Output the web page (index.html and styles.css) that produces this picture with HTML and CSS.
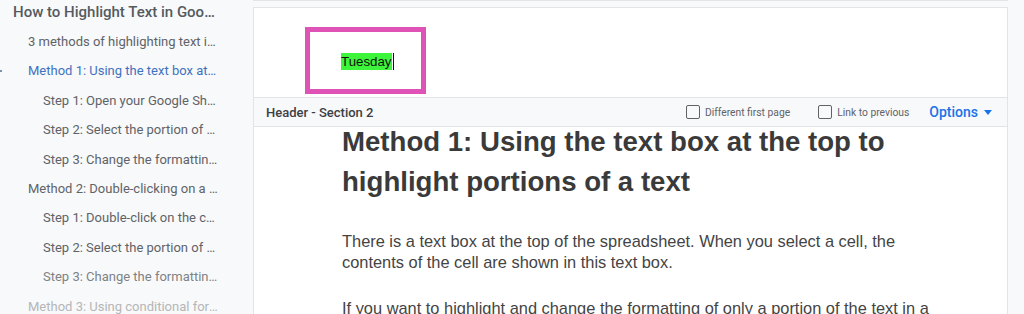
FILE: index.html
```html
<!DOCTYPE html>
<html>
<head>
<meta charset="utf-8">
<link rel="stylesheet" href="styles.css">
</head>
<body>
<nav class="outline">
  <div class="marker"></div>
  <div class="title">How to Highlight Text in Google Sheets</div>
  <div class="item l1">3 methods of highlighting text in Google Sheets</div>
  <div class="item l1 active">Method 1: Using the text box at the top</div>
  <div class="item l2">Step 1: Open your Google Sheets file</div>
  <div class="item l2">Step 2: Select the portion of the text</div>
  <div class="item l2">Step 3: Change the formatting of the text</div>
  <div class="item l1">Method 2: Double-clicking on a cell</div>
  <div class="item l2">Step 1: Double-click on the cell</div>
  <div class="item l2">Step 2: Select the portion of the text</div>
  <div class="item l2 fade1">Step 3: Change the formatting of the text</div>
  <div class="item l1 fade2">Method 3: Using conditional formatting</div>
</nav>
<main class="canvas">
  <div class="prev-page"></div>
  <section class="page">
    <div class="header-area">
      <div class="pink-box">
        <span class="hl">Tuesday</span><span class="caret"></span>
      </div>
    </div>
    <div class="header-bar">
      <span class="hb-label">Header - Section 2</span>
      <div class="hb-tools">
        <label class="cb"><span class="box"></span>Different first page</label>
        <label class="cb"><span class="box"></span>Link to previous</label>
        <span class="options">Options <svg class="caret-down" width="8" height="5" viewBox="0 0 8 5"><path d="M0 0h8L4 5z" fill="#1a73e8"/></svg></span>
      </div>
    </div>
    <article class="content">
      <h1>Method 1: Using the text box at the top to highlight portions of a text</h1>
      <p>There is a text box at the top of the spreadsheet. When you select a cell, the contents of the cell are shown in this text box.</p>
      <p>If you want to highlight and change the formatting of only a portion of the text in a cell, you can do it from this text box.</p>
    </article>
  </section>
</main>
</body>
</html>
```
FILE: styles.css
```css
html, body {
  margin: 0;
  padding: 0;
}
body {
  width: 1024px;
  height: 314px;
  overflow: hidden;
  display: flex;
  background: #f8f9fa;
  font-family: Roboto, "Noto Sans", sans-serif;
}
.outline {
  position: relative;
  width: 218px;
  padding-right: 22px;
  flex: none;
}
.marker {
  position: absolute;
  left: 0;
  top: 70px;
  width: 2px;
  height: 2px;
  background: #7d8fb0;
}
.title {
  padding-left: 13px;
  height: 27px;
  line-height: 24px;
  font-size: 15px;
  font-weight: 500;
  color: #555a5f;
  white-space: nowrap;
  overflow: hidden;
  text-overflow: ellipsis;
}
.item {
  height: 29.4px;
  line-height: 29.4px;
  font-size: 13px;
  color: #5f6368;
  white-space: nowrap;
  overflow: hidden;
  text-overflow: ellipsis;
}
.l1 { padding-left: 28px; }
.l2 { padding-left: 43px; }
.active { color: #3f72c0; }
.fade1 { color: #7e8286; }
.fade2 { color: #b4b6b8; }

.canvas {
  flex: 1;
  padding: 0 16px 0 13px;
  display: flex;
  flex-direction: column;
}
.prev-page {
  height: 3px;
  background: #fff;
  border: 1px solid #e3e4e6;
  border-top: none;
  margin-bottom: 6px;
}
.page {
  flex: 1;
  background: #fff;
  border: 1px solid #e3e4e6;
  border-bottom: none;
}
.header-area {
  height: 89px;
  padding: 19px 0 0 51px;
  box-sizing: border-box;
}
.pink-box {
  box-sizing: border-box;
  width: 121px;
  height: 67px;
  border: 5px solid #e053b6;
  padding: 21px 0 0 31px;
  display: flex;
  align-items: flex-start;
}
.hl {
  background: #3cf53a;
  font-family: "Liberation Sans", Arial, sans-serif;
  font-size: 13.3px;
  line-height: 17px;
  color: #111;
}
.caret {
  width: 1.5px;
  height: 17px;
  background: #111;
  margin-left: 1px;
}
.header-bar {
  height: 28px;
  background: #f8f9fa;
  border-top: 1px solid #e3e4e6;
  border-bottom: 1px solid #e3e4e6;
  display: flex;
  align-items: center;
  padding: 0 15px 0 12px;
}
.hb-label {
  font-size: 13px;
  font-weight: 500;
  color: #3c4043;
}
.hb-tools {
  margin-left: auto;
  display: flex;
  align-items: center;
}
.cb {
  display: flex;
  align-items: center;
  font-size: 10.3px;
  color: #5f6368;
  margin-right: 28px;
}
.cb:nth-child(2) { margin-right: 20px; }
.box {
  width: 12px;
  height: 12px;
  border: 1.5px solid #5f6368;
  border-radius: 2px;
  margin-right: 5px;
}
.options {
  font-size: 14px;
  font-weight: 500;
  color: #1a73e8;
  display: flex;
  align-items: center;
  gap: 6px;
}
.caret-down { display: block; margin-top: 1px; }

.content {
  padding: 0 0 0 88px;
  width: 600px;
  font-family: "Liberation Sans", Arial, sans-serif;
}
h1 {
  margin: -5px 0 29px;
  font-size: 27.6px;
  line-height: 40px;
  font-weight: bold;
  color: #3a3a3a;
}
p {
  margin: 0 0 25px;
  font-size: 16.4px;
  line-height: 21px;
  color: #444;
}
```
